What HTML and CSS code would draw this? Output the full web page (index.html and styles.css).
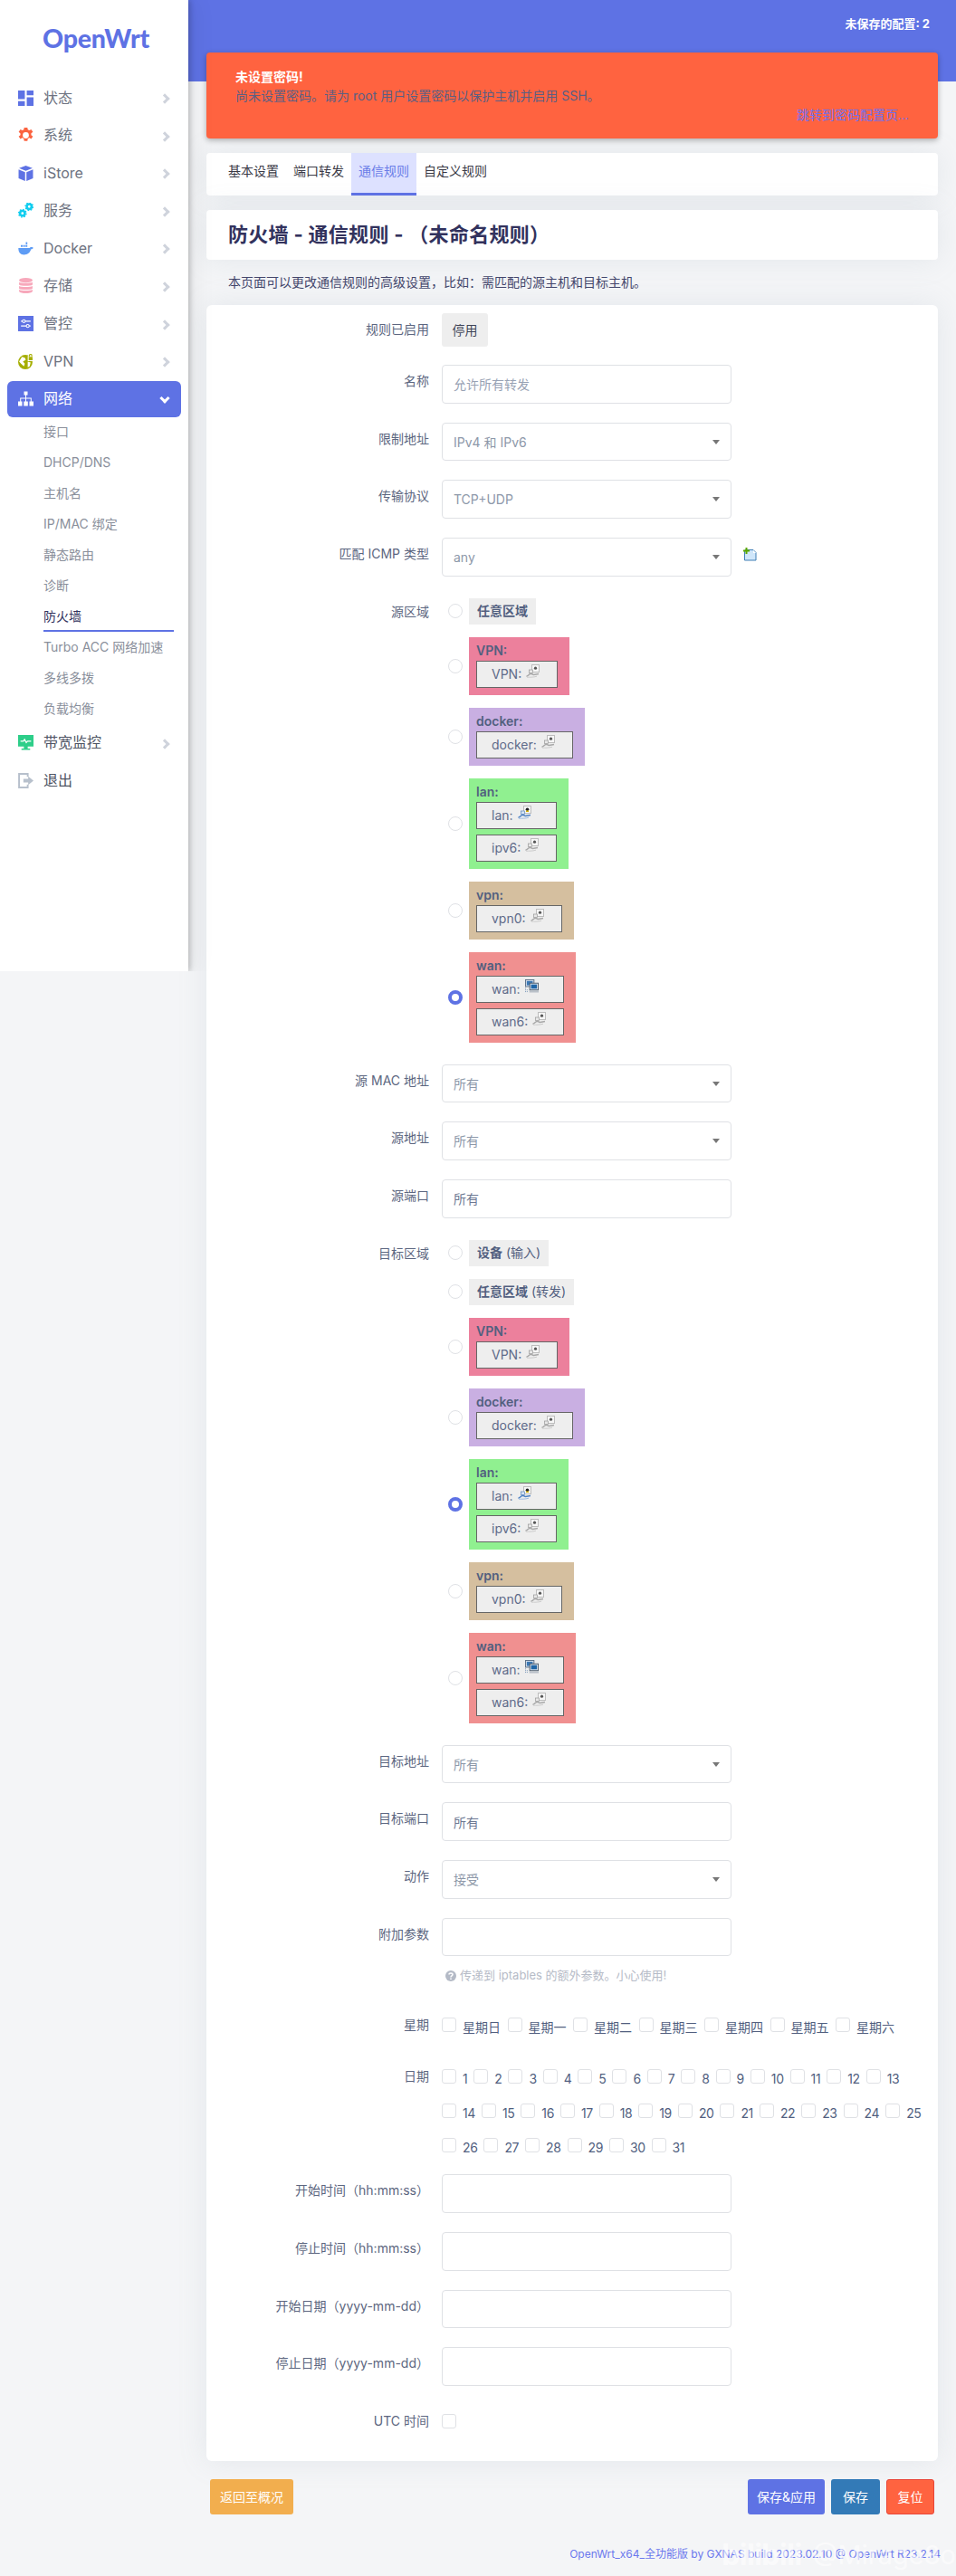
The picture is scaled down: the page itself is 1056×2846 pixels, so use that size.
FILE: index.html
```html
<!DOCTYPE html>
<html lang="zh-CN">
<head>
<meta charset="utf-8">
<title>防火墙 - 通信规则 - OpenWrt</title>
<link rel="stylesheet" href="styles.css">
</head>
<body>
<svg class="defs" width="0" height="0" aria-hidden="true">
  <symbol id="if-off" viewBox="0 0 15 15">
    <rect x="6.5" y="0.5" width="8" height="8" fill="#f6f6f6" stroke="#bdbdbd"/>
    <circle cx="10.5" cy="4.2" r="1.6" fill="#555"/>
    <rect x="3.5" y="6" width="4" height="3.5" fill="#e8e8e8" stroke="#999" stroke-width=".7"/>
    <path d="M.5 13.2c2.500-.4 3-2.800 5-3 1.500.1 1.500 1.200 3 1.200 2 0 3-.7 5.500-.9" fill="none" stroke="#a9a9a9" stroke-width="1.500"/>
    <path d="M1 14.200c3 0 7 .2 11-1" fill="none" stroke="#ccc"/>
  </symbol>
  <symbol id="if-lan" viewBox="0 0 15 15">
    <rect x="6.500" y="0.500" width="8" height="8" fill="#f6f6f6" stroke="#bdbdbd"/>
    <circle cx="10.500" cy="4.200" r="1.800" fill="#222"/>
    <path d="M9 5.500h3v1.500H9z" fill="#d8b400"/>
    <rect x="3.500" y="6" width="4" height="3.500" fill="#d7e3f2" stroke="#5c86bd" stroke-width=".7"/>
    <path d="M.5 13.200c2.500-.4 3-2.800 5-3 1.500.1 1.500 1.200 3 1.200 2 0 3-.7 5.500-.9" fill="none" stroke="#4f82c4" stroke-width="1.500"/>
    <path d="M1 14.200c3 0 7 .2 11-1" fill="none" stroke="#9fbbe0"/>
  </symbol>
  <symbol id="if-wan" viewBox="0 0 16 16">
    <rect x=".5" y=".5" width="10" height="8" fill="#d5dfec" stroke="#5a6e86"/>
    <rect x="2" y="2" width="7" height="5" fill="#3b78b5"/>
    <rect x="5.500" y="4.500" width="10" height="8" fill="#e4eaf2" stroke="#4b5a6b"/>
    <rect x="7" y="6" width="7" height="5" fill="#1f65a6"/>
    <rect x="5" y="13" width="11" height="2.500" fill="#b9c0c8"/>
    <path d="M.5 10v5M2.500 12v3" stroke="#6f8fb3" stroke-dasharray="1 1"/>
  </symbol>
</svg>

<aside class="sidebar">
  <div class="logo">OpenWrt</div>
  <nav class="menu">
    <a class="item"><svg class="ico" viewBox="0 0 16 16"><path fill="#5e72e4" d="M0 0h7v9H0zM9 0h7v5H9zM9 7h7v9H9zM0 11h7v5H0z"/></svg><span>状态</span><i class="chev"></i></a>
    <a class="item"><svg class="ico" viewBox="0 0 16 16"><path fill="#fb6340" fill-rule="evenodd" d="M6.300 0h3.400l.4 2.200 1.500.7 2-1.100 1.800 2.700-1.800 1.400v1.800l1.800 1.400-1.800 2.700-2-1.100-1.500.9-.4 2.200H6.300l-.4-2.200-1.500-.9-2 1.100L.6 9.100l1.800-1.400V6.200L.6 4.500l1.800-2.700 2 1.100 1.500-.7zM8 4.800a3.200 3.200 0 1 0 0 6.400 3.200 3.200 0 0 0 0-6.400z"/></svg><span>系统</span><i class="chev"></i></a>
    <a class="item"><svg class="ico" viewBox="0 0 16 16"><path fill="#5e72e4" d="M8 0l7 2.700L8 5.500 1 2.700zM.5 4l6.800 2.800V16L.5 13.200zM15.500 4v9.200L8.700 16V6.800z"/></svg><span>iStore</span><i class="chev"></i></a>
    <a class="item"><svg class="ico" viewBox="0 0 16 16"><g fill="none" stroke="#11cdef"><circle cx="4.500" cy="11" r="2.500" stroke-width="2.400"/><circle cx="11.500" cy="4" r="2.500" stroke-width="2.400"/><circle cx="4.500" cy="11" r="4" stroke-width="1.200" stroke-dasharray="1.600 1.500"/><circle cx="11.500" cy="4" r="4" stroke-width="1.200" stroke-dasharray="1.600 1.500"/></g></svg><span>服务</span><i class="chev"></i></a>
    <a class="item"><svg class="ico" viewBox="0 0 17 14"><path fill="#5e9cf5" d="M8.500 0h1.700v2.500H8.500zM3 3.200h2v2H3zM5.600 3.200h2v2h-2zM8.200 3.200h2v2h-2zM.3 6.500h12.300c.5-1 1.700-1.300 3-.9l1.200.7c-.5 1-1.300 1.500-2.400 1.500C13.200 11.600 10.500 14 6.500 14 2.500 14 .3 11.200.3 6.500z"/></svg><span>Docker</span><i class="chev"></i></a>
    <a class="item"><svg class="ico" viewBox="0 0 16 16"><g fill="#f7a8bb"><ellipse cx="8" cy="2.500" rx="7" ry="2.500"/><path d="M1 4.500c1.500 1.300 12.500 1.300 14 0V7c-1.500 1.800-12.500 1.800-14 0zM1 8.500c1.500 1.300 12.500 1.300 14 0V11c-1.500 1.800-12.500 1.800-14 0zM1 12.300c1.500 1.300 12.500 1.300 14 0V14c-1.500 2.600-12.500 2.600-14 0z"/></g></svg><span>存储</span><i class="chev"></i></a>
    <a class="item"><svg class="ico" viewBox="0 0 16 16"><path fill="#5e72e4" d="M0 0h16v16H0z"/><path stroke="#fff" stroke-width="1.200" d="M3 5.500h10M3 10.500h10"/><circle cx="6" cy="5.500" r="1.500" fill="#5e72e4" stroke="#fff"/><circle cx="10" cy="10.500" r="1.500" fill="#5e72e4" stroke="#fff"/></svg><span>管控</span><i class="chev"></i></a>
    <a class="item"><svg class="ico" viewBox="0 0 16 16"><circle cx="7.500" cy="8.500" r="7.500" fill="#a5ae00"/><path fill="#fff" d="M4 3l3 1 1 2-3 2 2 2-1 3-3-3-2-2zM10 8l3 1-1 4-2 1z"/><path fill="#a5ae00" stroke="#fff" d="M10.500 2.500h5v4.500h-5z"/><path fill="none" stroke="#a5ae00" d="M11.800 2.500V1.400c0-1.200 2.400-1.200 2.400 0v1.100"/></svg><span>VPN</span><i class="chev"></i></a>
    <a class="item active"><svg class="ico" viewBox="0 0 17 16"><path fill="#fff" d="M6.500 0h4v4h-4zM0 11h4.500v5H0zM6.300 11h4.500v5H6.300zM12.500 11H17v5h-4.500zM8 4h1v3h5.800v4h-1V8H9v3H8V8H3.200v3h-1V7H8z"/></svg><span>网络</span><i class="chev open"></i></a>
    <ul class="sub">
      <li>接口</li>
      <li>DHCP/DNS</li>
      <li>主机名</li>
      <li>IP/MAC 绑定</li>
      <li>静态路由</li>
      <li>诊断</li>
      <li class="current">防火墙</li>
      <li>Turbo ACC 网络加速</li>
      <li>多线多拨</li>
      <li>负载均衡</li>
    </ul>
    <a class="item"><svg class="ico" viewBox="0 0 16 16"><path fill="#2dce89" d="M0 0h16v12H0zM6 12h4v2h2.500v1.500h-9V14H6z"/><path fill="none" stroke="#fff" stroke-width="1.200" d="M2.500 6.500h3l1.200-1.800 1.800 3.200 1.300-1.400h3.700"/></svg><span class="dark">带宽监控</span><i class="chev"></i></a>
    <a class="item"><svg class="ico" viewBox="0 0 16 16"><path fill="none" stroke="#b7c0cc" stroke-width="1.800" d="M10 4V1H1v14h9v-3"/><path fill="#b7c0cc" d="M5.500 6.200h5V3.500L16 8l-5.500 4.500V9.800h-5z"/></svg><span class="dark">退出</span></a>
  </nav>
</aside>

<main class="main">
  <header class="topbar"><span class="unsaved">未保存的配置: 2</span></header>

  <section class="alert">
    <h4>未设置密码!</h4>
    <p>尚未设置密码。请为 root 用户设置密码以保护主机并启用 SSH。</p>
    <a class="alert-link">跳转到密码配置页...</a>
  </section>

  <ul class="tabs">
    <li>基本设置</li>
    <li>端口转发</li>
    <li class="on">通信规则</li>
    <li>自定义规则</li>
  </ul>

  <h2 class="title">防火墙 - 通信规则 - （未命名规则）</h2>
  <p class="desc">本页面可以更改通信规则的高级设置，比如：需匹配的源主机和目标主机。</p>

  <form class="card">
    <div class="row short"><label>规则已启用</label><button type="button" class="toggle">停用</button></div>
    <div class="row"><label>名称</label><input class="field" placeholder="允许所有转发"></div>
    <div class="row"><label>限制地址</label><div class="field sel">IPv4 和 IPv6</div></div>
    <div class="row"><label>传输协议</label><div class="field sel">TCP+UDP</div></div>
    <div class="row pre-zone"><label>匹配 ICMP 类型</label><div class="field sel">any</div>
      <svg class="add" viewBox="0 0 15 15"><path fill="#cfe6fa" stroke="#3f7fb5" d="M2 2.500h9l3 3v8.500H1.500V3z"/><path fill="#fff" d="M11 3l3 3h-3z"/><path fill="#5aa800" d="M2.500 0h2v2.500H7v2H4.500V7h-2V4.500H0v-2h2.500z"/></svg>
    </div>

    <div class="row zones"><label>源区域</label>
      <div class="zone-list">
        <div class="z"><i class="radio"></i><div class="zlabel"><b>任意区域</b></div></div>
        <div class="z"><i class="radio"></i><div class="zbox c-vpn"><b>VPN:</b><div class="dev">VPN:<svg class="if"><use href="#if-off"/></svg></div></div></div>
        <div class="z"><i class="radio"></i><div class="zbox c-docker"><b>docker:</b><div class="dev">docker:<svg class="if"><use href="#if-off"/></svg></div></div></div>
        <div class="z"><i class="radio"></i><div class="zbox c-lan"><b>lan:</b><div class="dev">lan:<svg class="if"><use href="#if-lan"/></svg></div><div class="dev">ipv6:<svg class="if"><use href="#if-off"/></svg></div></div></div>
        <div class="z"><i class="radio"></i><div class="zbox c-tan"><b>vpn:</b><div class="dev">vpn0:<svg class="if"><use href="#if-off"/></svg></div></div></div>
        <div class="z"><i class="radio checked"></i><div class="zbox c-wan"><b>wan:</b><div class="dev">wan:<svg class="if"><use href="#if-wan"/></svg></div><div class="dev">wan6:<svg class="if"><use href="#if-off"/></svg></div></div></div>
      </div>
    </div>

    <div class="row"><label>源 MAC 地址</label><div class="field sel">所有</div></div>
    <div class="row"><label>源地址</label><div class="field sel">所有</div></div>
    <div class="row pre-zone"><label>源端口</label><input class="field" value="所有"></div>

    <div class="row zones"><label>目标区域</label>
      <div class="zone-list">
        <div class="z"><i class="radio"></i><div class="zlabel"><b>设备</b> (输入)</div></div>
        <div class="z"><i class="radio"></i><div class="zlabel"><b>任意区域</b> (转发)</div></div>
        <div class="z"><i class="radio"></i><div class="zbox c-vpn"><b>VPN:</b><div class="dev">VPN:<svg class="if"><use href="#if-off"/></svg></div></div></div>
        <div class="z"><i class="radio"></i><div class="zbox c-docker"><b>docker:</b><div class="dev">docker:<svg class="if"><use href="#if-off"/></svg></div></div></div>
        <div class="z"><i class="radio checked"></i><div class="zbox c-lan"><b>lan:</b><div class="dev">lan:<svg class="if"><use href="#if-lan"/></svg></div><div class="dev">ipv6:<svg class="if"><use href="#if-off"/></svg></div></div></div>
        <div class="z"><i class="radio"></i><div class="zbox c-tan"><b>vpn:</b><div class="dev">vpn0:<svg class="if"><use href="#if-off"/></svg></div></div></div>
        <div class="z"><i class="radio"></i><div class="zbox c-wan"><b>wan:</b><div class="dev">wan:<svg class="if"><use href="#if-wan"/></svg></div><div class="dev">wan6:<svg class="if"><use href="#if-off"/></svg></div></div></div>
      </div>
    </div>

    <div class="row"><label>目标地址</label><div class="field sel">所有</div></div>
    <div class="row"><label>目标端口</label><input class="field" value="所有"></div>
    <div class="row"><label>动作</label><div class="field sel">接受</div></div>
    <div class="row tight"><label>附加参数</label><input class="field"></div>
    <p class="help"><svg class="q" viewBox="0 0 12 12"><circle cx="6" cy="6" r="6" fill="#b4bac6"/><path fill="none" stroke="#fff" stroke-width="1.500" d="M4 4.500C4 2.500 8 2.500 8 4.500 8 6 6 5.800 6 7.500"/><path stroke="#fff" stroke-width="1.500" d="M6 8.500V10"/></svg>传递到 iptables 的额外参数。小心使用!</p>

    <div class="row checks week"><label>星期</label>
      <div class="opts">
        <span class="opt"><i class="cb"></i>星期日</span><span class="opt"><i class="cb"></i>星期一</span><span class="opt"><i class="cb"></i>星期二</span><span class="opt"><i class="cb"></i>星期三</span><span class="opt"><i class="cb"></i>星期四</span><span class="opt"><i class="cb"></i>星期五</span><span class="opt"><i class="cb"></i>星期六</span>
      </div>
    </div>
    <div class="row checks days"><label>日期</label>
      <div class="opts">
        <span class="opt"><i class="cb"></i>1</span><span class="opt"><i class="cb"></i>2</span><span class="opt"><i class="cb"></i>3</span><span class="opt"><i class="cb"></i>4</span><span class="opt"><i class="cb"></i>5</span><span class="opt"><i class="cb"></i>6</span><span class="opt"><i class="cb"></i>7</span><span class="opt"><i class="cb"></i>8</span><span class="opt"><i class="cb"></i>9</span><span class="opt"><i class="cb"></i>10</span><span class="opt"><i class="cb"></i>11</span><span class="opt"><i class="cb"></i>12</span><span class="opt"><i class="cb"></i>13</span><span class="opt"><i class="cb"></i>14</span><span class="opt"><i class="cb"></i>15</span><span class="opt"><i class="cb"></i>16</span><span class="opt"><i class="cb"></i>17</span><span class="opt"><i class="cb"></i>18</span><span class="opt"><i class="cb"></i>19</span><span class="opt"><i class="cb"></i>20</span><span class="opt"><i class="cb"></i>21</span><span class="opt"><i class="cb"></i>22</span><span class="opt"><i class="cb"></i>23</span><span class="opt"><i class="cb"></i>24</span><span class="opt"><i class="cb"></i>25</span><span class="opt"><i class="cb"></i>26</span><span class="opt"><i class="cb"></i>27</span><span class="opt"><i class="cb"></i>28</span><span class="opt"><i class="cb"></i>29</span><span class="opt"><i class="cb"></i>30</span><span class="opt"><i class="cb"></i>31</span>
      </div>
    </div>

    <div class="row"><label>开始时间（hh:mm:ss）</label><input class="field"></div>
    <div class="row"><label>停止时间（hh:mm:ss）</label><input class="field"></div>
    <div class="row"><label>开始日期（yyyy-mm-dd）</label><input class="field"></div>
    <div class="row pre-utc"><label>停止日期（yyyy-mm-dd）</label><input class="field"></div>
    <div class="row checks utc"><label>UTC 时间</label><i class="cb"></i></div>
  </form>

  <div class="actions">
    <button type="button" class="btn back">返回至概况</button>
    <span class="spacer"></span>
    <button type="button" class="btn apply">保存&amp;应用</button>
    <button type="button" class="btn save">保存</button>
    <button type="button" class="btn reset">复位</button>
  </div>

  <footer class="foot">OpenWrt_x64_全功能版 by GXNAS build 2023.02.10 @ OpenWrt R23.2.14</footer>
</main>

<div class="watermark"><span class="bili">bilibili</span><span>@Mirage8o</span></div>
</body>
</html>
```
FILE: styles.css
```css
* { box-sizing: border-box; }
html, body { margin: 0; padding: 0; }
body {
  position: relative;
  display: flex;
  align-items: flex-start;
  height: 2846px;
  overflow: hidden;
  background: #f4f5f7;
  color: #525f7f;
  font: 14px/21px Inter, "Noto Sans CJK SC", sans-serif;
}
.defs { position: absolute; }

/* Sidebar */
.sidebar {
  position: relative;
  z-index: 2;
  flex: 0 0 208px;
  height: 1073px;
  background: #fff;
  box-shadow: 2px 0 6px rgba(0, 0, 0, .22), 8px 0 24px rgba(0, 0, 0, .05);
  clip-path: inset(0 -40px 0 0);
}
.logo {
  height: 88px;
  padding: 24px 0 0 47px;
  color: #5e72e4;
  font: 900 28.5px/36px Lato, sans-serif;
  letter-spacing: -.2px;
}
.menu { display: flex; flex-direction: column; padding: 0 8px; }
.item {
  display: flex;
  align-items: center;
  height: 40px;
  margin-bottom: 1.6px;
  padding: 0 12px;
  border-radius: 6px;
  color: #6d7280;
  font-size: 16px;
}
.item.active { margin-bottom: 0; background: #5e72e4; color: #fff; }
.item .dark { color: #4f5564; }
.ico { flex: 0 0 17px; width: 17px; height: 17px; margin-right: 11px; }
.chev {
  width: 8px; height: 8px;
  margin: 2px 2px 0 auto;
  border: solid #cfd3dc;
  border-width: 3px 3px 0 0;
  transform: rotate(45deg);
}
.chev.open { border-color: #fff; margin-top: -2px; transform: rotate(135deg); }
.sub { margin: -1px 0 1px; padding: 0; list-style: none; }
.sub li {
  height: 34px;
  margin: 0 8px 0 40px;
  color: #8a8f9b;
  line-height: 34px;
}
.sub li.current { color: #32325d; border-bottom: 2px solid #5e72e4; }

/* Main column */
.main { flex: 1; min-width: 0; padding: 0 20px; }
.topbar {
  display: flex;
  justify-content: flex-end;
  height: 90px;
  margin: 0 -20px -32px;
  padding: 16px 29px 0 0;
  background: #5e72e4;
}
.unsaved { color: #fff; font-size: 13px; font-weight: 700; }

.alert {
  position: relative;
  height: 95px;
  padding: 16px 32px;
  border-radius: 4px;
  background: #ff6340;
  box-shadow: 0 2px 6px rgba(0, 0, 0, .3);
}
.alert h4 { margin: 0; color: #fff; font-size: 14px; font-weight: 700; line-height: 21px; }
.alert p { margin: 0; color: #5a5f83; }
.alert-link { display: block; color: #6f6ff0; text-align: right; }

.tabs {
  display: flex;
  height: 47px;
  margin: 16px 0;
  padding: 0 0 0 16px;
  border-radius: 4px;
  background: #fff;
  box-shadow: 0 0 32px rgba(136, 152, 170, .15);
  list-style: none;
}
.tabs li { padding: 9px 8px 0; color: #3a3a46; }
.tabs li.on { background: #dde1ff; border-bottom: 3px solid #5e72e4; color: #6a7ce8; }

.title {
  height: 55px;
  margin: 0;
  padding: 0 24px;
  border-radius: 4px;
  background: #fff;
  box-shadow: 0 0 32px rgba(136, 152, 170, .15);
  color: #32325d;
  font-size: 22px;
  font-weight: 700;
  letter-spacing: .3px;
  line-height: 55px;
}
.desc { margin: 14px 0 15px; padding-left: 24px; color: #43466b; }

/* Form */
.card {
  height: 2382px;
  padding-top: 9px;
  border-radius: 6px;
  background: #fff;
  box-shadow: 0 0 32px rgba(136, 152, 170, .15);
}
.row { display: flex; align-items: flex-start; margin-bottom: 21px; }
.row.short { margin-bottom: 20px; }
.row.pre-zone { margin-bottom: 24px; }
.row.zones { margin-bottom: 24px; }
.row.tight { margin-bottom: 11px; }
.row.pre-utc { margin-bottom: 31px; }
.row > label {
  flex: 0 0 246px;
  margin-right: 14px;
  color: #5c6680;
  line-height: 35px;
  text-align: right;
  white-space: nowrap;
}
.zones > label { line-height: 29px; }
.checks > label { line-height: 16px; }
.toggle {
  width: 51px;
  height: 37px;
  padding: 0;
  border: 0;
  border-radius: 3px;
  background: #eee;
  color: #3e4456;
  font: inherit;
}
.field {
  display: block;
  width: 320px;
  height: 42.67px;
  padding: 0 12px;
  border: 1px solid #dfe1e5;
  border-radius: 4px;
  background: #fff;
  color: #6d7892;
  font: inherit;
  line-height: 41px;
  outline: 0;
}
.field::placeholder { color: #98a2b4; opacity: 1; }
.sel { position: relative; color: #8d98a9; }
.sel::after {
  content: "";
  position: absolute;
  top: 18px;
  right: 12px;
  border: 4px solid transparent;
  border-top: 5px solid #777;
  border-bottom: 0;
}
.add { width: 15px; height: 15px; margin: 11px 0 0 13px; }

/* Zones */
.zone-list { display: flex; flex-direction: column; gap: 14px; }
.z { display: flex; align-items: center; }
.radio {
  flex: 0 0 16px;
  height: 16px;
  margin: 0 7px;
  border: 1px solid #dfe1e5;
  border-radius: 50%;
  background: #fff;
}
.radio.checked { border: 4.500px solid #5e72e4; }
.zlabel { height: 29px; padding: 0 9px; background: #eee; line-height: 27px; }
.zlabel b, .zbox > b { font-weight: 600; color: #525f7f; }
.zbox { padding: 4px 13px 7.500px 8px; line-height: 21px; }
.dev {
  display: flex;
  align-items: center;
  height: 30.500px;
  margin-top: 5.500px;
  padding: 0 19px 0 16px;
  border: 1px solid #666;
  background: #eee;
  color: #5f6b8a;
}
.zbox > b + .dev { margin-top: 1px; }
.if { width: 15px; height: 15px; margin: -6px 0 0 5px; }
.c-vpn { background: #ec809c; }
.c-docker { background: #c9afe2; }
.c-lan { background: #90f090; }
.c-tan { background: #d5bf9f; }
.c-wan { background: #f09090; }

.help { display: flex; align-items: center; margin: 0 0 36px 264px; color: #b6bbc7; font-size: 13px; }
.q { width: 12px; height: 12px; margin-right: 4px; }

/* Checkboxes */
.week { margin-bottom: 35px; }
.days { margin-bottom: 18px; }
.opts { display: flex; flex-wrap: wrap; row-gap: 16px; width: 540px; }
.opt { display: flex; margin-right: 7.500px; height: 22px; color: #525f7f; line-height: 22px; }
.days .opt { margin-right: 7px; letter-spacing: -.4px; }
.cb {
  flex: 0 0 16px;
  height: 16px;
  margin-right: 7px;
  border: 1px solid #dfe1e5;
  border-radius: 3px;
  background: #fff;
}

/* Footer */
.actions { display: flex; gap: 7px; margin: 20px 4px 0; }
.spacer { flex: 1; }
.btn {
  height: 39px;
  padding: 0 13px;
  border: 0;
  border-radius: 3px;
  color: #fff;
  font: inherit;
}
.back { padding: 0 11px; background: #f2ae4e; }
.apply { padding: 0 10px; background: #5e72e4; }
.save { background: #337ab7; }
.reset { padding: 0 11.500px; background: #ff6340; border: 1px solid #e8463a; }
.foot {
  margin: 33px -3px 0 0;
  color: #6b78ee;
  font-size: 12px;
  text-align: right;
  white-space: nowrap;
}
.watermark {
  position: absolute;
  right: 0;
  bottom: 0;
  display: flex;
  align-items: center;
  gap: 12px;
  height: 46px;
  color: rgba(255, 255, 255, .6);
  font: 400 29px/46px Inter, sans-serif;
  pointer-events: none;
  white-space: nowrap;
}
.watermark .bili { font-size: 32px; font-weight: 700; letter-spacing: -.5px; }
```
